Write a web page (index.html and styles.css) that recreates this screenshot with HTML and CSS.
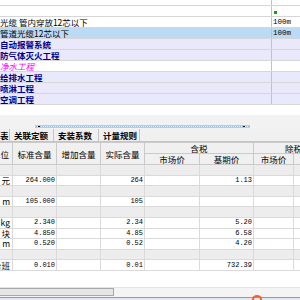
FILE: index.html
```html
<!DOCTYPE html>
<html lang="zh-CN">
<head>
  <meta charset="UTF-8" />
  <title>定额含量</title>
  <link rel="stylesheet" href="styles.css">
</head>
<body>

<div class="tree">
  <div class="tree-row part"><span class="name"></span><span class="qty"></span></div>
  <div class="tree-row"><span class="name"></span><span class="qty"><i class="flag"></i></span></div>
  <div class="tree-row"><span class="name">光缆 管内穿放12芯以下</span><span class="qty">100m</span></div>
  <div class="tree-row sel"><span class="name">管道光缆12芯以下</span><span class="qty">100m</span></div>
  <div class="tree-row grp"><span class="name">自动报警系统</span><span class="qty"></span></div>
  <div class="tree-row grp"><span class="name">防气体灭火工程</span><span class="qty"></span></div>
  <div class="tree-row pink"><span class="name">净水工程</span><span class="qty"></span></div>
  <div class="tree-row grp"><span class="name">给排水工程</span><span class="qty"></span></div>
  <div class="tree-row grp"><span class="name">喷淋工程</span><span class="qty"></span></div>
  <div class="tree-row grp"><span class="name">空调工程</span><span class="qty"></span></div>
</div>

<div class="spacer"></div>

<div class="split-area">
  <div class="splitter"><i></i><i></i></div>
</div>

<div class="tabs">
  <span class="tab first">表</span>
  <span class="tab">关联定额</span>
  <span class="tab">安装系数</span>
  <span class="tab">计量规则</span>
</div>

<div class="grid-wrap">
  <table class="grid">
    <colgroup>
      <col class="c-unit"><col class="c-num"><col class="c-num"><col class="c-num">
      <col class="c-price"><col class="c-base"><col class="c-ex"><col class="c-ex">
    </colgroup>
    <thead>
      <tr>
        <th rowspan="2">单位</th>
        <th rowspan="2">标准含量</th>
        <th rowspan="2">增加含量</th>
        <th rowspan="2">实际含量</th>
        <th colspan="2">含税</th>
        <th colspan="2">除税</th>
      </tr>
      <tr>
        <th>市场价</th>
        <th>基期价</th>
        <th>市场价</th>
        <th>基期价</th>
      </tr>
    </thead>
    <tbody>
      <tr class="cat"><td></td><td></td><td></td><td></td><td></td><td></td><td></td><td></td></tr>
      <tr><td class="unit">元</td><td>264.000</td><td></td><td>264</td><td></td><td>1.13</td><td></td><td></td></tr>
      <tr class="cat"><td></td><td></td><td></td><td></td><td></td><td></td><td></td><td></td></tr>
      <tr><td class="unit">m</td><td>105.000</td><td></td><td>105</td><td></td><td></td><td></td><td></td></tr>
      <tr class="cat"><td></td><td></td><td></td><td></td><td></td><td></td><td></td><td></td></tr>
      <tr><td class="unit">kg</td><td>2.340</td><td></td><td>2.34</td><td></td><td>5.20</td><td></td><td></td></tr>
      <tr><td class="unit">块</td><td>4.850</td><td></td><td>4.85</td><td></td><td>6.58</td><td></td><td></td></tr>
      <tr><td class="unit">m</td><td>0.520</td><td></td><td>0.52</td><td></td><td>4.20</td><td></td><td></td></tr>
      <tr class="cat"><td></td><td></td><td></td><td></td><td></td><td></td><td></td><td></td></tr>
      <tr><td class="unit">台班</td><td>0.010</td><td></td><td>0.01</td><td></td><td>732.39</td><td></td><td></td></tr>
    </tbody>
  </table>
</div>

<div class="bottom">
  <div class="hscroll"><div class="thumb"></div></div>
  <div class="taskbar"><i class="arc"></i></div>
</div>

</body>
</html>
```

FILE: styles.css
```css
body {
  margin: 0;
  width: 300px;
  height: 300px;
  overflow: hidden;
  background: #fff;
  font-family: "Noto Sans CJK SC", "Liberation Sans", sans-serif;
  font-size: 8.5px;
  color: #000;
}

/* upper tree list */
.tree {
  display: flex;
  flex-direction: column;
}

.tree-row {
  display: grid;
  grid-template-columns: 271px 1fr;
  height: 11px;
  border-bottom: 1px solid #d6d6d6;
  box-sizing: border-box;
  line-height: 10px;
  overflow: hidden;
}

.tree-row.part {
  height: 6px;
}

.tree-row .name {
  white-space: nowrap;
  overflow: hidden;
}

.tree-row .qty {
  border-left: 1px solid #b6c4d4;
  font-family: "Liberation Mono", monospace;
  font-size: 7.5px;
  padding-left: 1px;
  position: relative;
}

.flag {
  position: absolute;
  left: 2px;
  top: 5px;
  width: 3px;
  height: 3px;
  background: #12a012;
}

.tree-row.sel {
  background: #bcdaf3;
}

.tree-row.grp {
  background: #e9e9fb;
  color: #00008c;
  font-weight: bold;
}

.tree-row.pink {
  color: #ff00ff;
  font-style: italic;
}

.spacer {
  height: 10px;
}

/* splitter strip */
.split-area {
  height: 14px;
  background: #f2f2f2;
  position: relative;
}

.splitter {
  position: absolute;
  left: 35px;
  top: 10px;
  width: 215px;
  height: 3px;
  box-sizing: border-box;
  border: 1px solid #c8c8c8;
  background: repeating-linear-gradient(90deg, #9fc0dc 0 1px, #eef4fa 1px 2px);
}

.splitter i {
  position: absolute;
  top: 0;
  width: 2px;
  height: 1px;
  background: #000;
}

.splitter i:first-child { left: 2px; }
.splitter i:last-child { right: 4px; }

/* tabs */
.tabs {
  display: flex;
  height: 13px;
  background: #f0f0f0;
  border-bottom: 1px solid #c4c4c4;
  box-sizing: border-box;
  font-weight: bold;
  line-height: 12px;
}

.tab {
  padding: 0 4px;
  border-right: 1px solid #c4c4c4;
  white-space: nowrap;
  box-sizing: border-box;
}

.tab.first {
  width: 10px;
  padding: 0;
}

.tab:nth-child(2) { width: 44px; }
.tab:nth-child(3) { width: 45px; }
.tab:nth-child(4) { width: 41px; }

/* lower grid */
.grid-wrap {
  height: 130px;
  overflow: hidden;
}

.grid {
  margin-left: -12px;
  border-collapse: collapse;
  table-layout: fixed;
  width: 344px;
}

.c-unit { width: 24px; }
.c-num { width: 44px; }
.c-price { width: 55px; }
.c-base { width: 54px; }
.c-ex { width: 40px; }

.grid th {
  background: #f0f0f0;
  border: 1px solid #cacaca;
  font-weight: normal;
  height: 10px;
  padding: 0;
  line-height: 10px;
  white-space: nowrap;
  overflow: hidden;
}

.grid td {
  border: 1px solid #dadada;
  height: 9.6px;
  padding: 0 1px 0 0;
  line-height: 9px;
  text-align: right;
  font-family: "Liberation Mono", monospace;
  font-size: 7px;
  white-space: nowrap;
  overflow: hidden;
}

.grid td.unit {
  font-family: "Noto Sans CJK SC", "Liberation Sans", sans-serif;
  font-size: 8.5px;
  padding-right: 2px;
}

.grid tr.cat td {
  background: #ededed;
}

/* bottom bars */
.bottom {
  height: 29px;
  display: flex;
  flex-direction: column;
  justify-content: flex-end;
}

.hscroll {
  height: 10px;
  background: #f4f4f4;
  border-top: 1px solid #e4e4e4;
  box-sizing: border-box;
}

.thumb {
  width: 114px;
  height: 8px;
  background: #e6e6e6;
  border: 1px solid #a8a8a8;
  border-left: none;
  box-sizing: border-box;
}

.taskbar {
  height: 3px;
  border-top: 1px solid #9a9a9a;
  background: #dfe8f2;
  position: relative;
}

.arc {
  position: absolute;
  left: 252px;
  top: -3px;
  width: 10px;
  height: 8px;
  border: 2px solid #f0622a;
  border-radius: 50%;
  box-sizing: border-box;
}
```
